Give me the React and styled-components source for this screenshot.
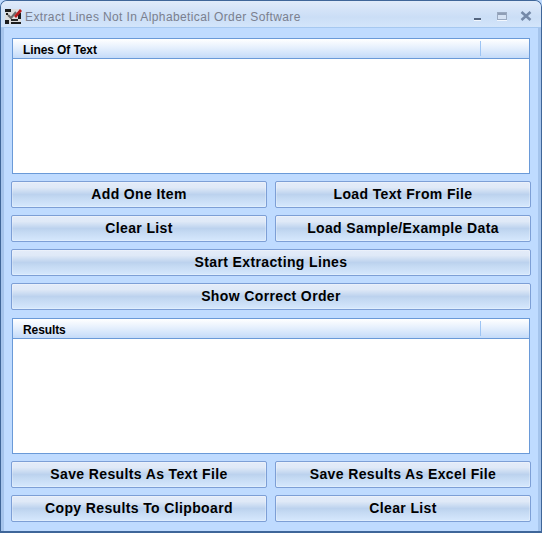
import React from "react";
import styled, { createGlobalStyle } from "styled-components";

const Global = createGlobalStyle`
  html, body { margin: 0; padding: 0; background: #bfdbff; }
  #root { width: 542px; height: 533px; overflow: hidden; }
`;

const Win = styled.div`
  width: 542px;
  height: 533px;
  box-sizing: border-box;
  display: flex;
  flex-direction: column;
  background: #bfdbff;
  border-radius: 7px 7px 0 0;
  border: 1px solid #3f6699;
  border-bottom-width: 2px;
  font-family: "Liberation Sans", Arial, sans-serif;
`;

const TitleBar = styled.div`
  height: 27px;
  box-sizing: border-box;
  flex: none;
  display: flex;
  align-items: center;
  padding: 5px 0 0 4px;
  background: linear-gradient(180deg, #e0ebfa 0%, #d5e4f8 30%, #cbdef6 62%, #d3e5fb 100%);
  border-bottom: 1px solid #a6c8f0;
  border-radius: 6px 6px 0 0;
`;

const TitleIcon = styled.svg`
  width: 17px;
  height: 17px;
  flex: none;
`;

const TitleText = styled.div`
  margin-left: 3px;
  font-size: 12px;
  letter-spacing: 0.38px;
  color: #7b7f8e;
  white-space: nowrap;
  flex: 1;
`;

const Controls = styled.div`
  display: flex;
  align-items: center;
  gap: 4px;
  padding-right: 4px;
`;

const CtrlIcon = styled.svg`
  display: block;
  width: 20px;
  height: 14px;
`;

const Body = styled.div`
  flex: 1;
  display: flex;
  flex-direction: column;
  gap: 7px;
  padding: 10px 7px 0;
  border-left: 3px solid #a5c4ec;
  border-right: 3px solid #a5c4ec;
  box-sizing: border-box;
`;

const ListBox = styled.div`
  height: 136px;
  margin: ${(p) => (p.$lower ? "1px" : "0")} 1px 0;
  flex: none;
  box-sizing: border-box;
  background: #fff;
  border: 1px solid #6a9ad8;
  display: flex;
  flex-direction: column;
`;

const ListHead = styled.div`
  height: 19px;
  flex: none;
  display: flex;
  background: linear-gradient(180deg, #ffffff 0%, #e6f0fd 45%, #c4dbf9 100%);
  border-bottom: 1px solid #6a9ad8;
`;

const HeadCell = styled.div`
  width: 457px;
  padding-left: 10px;
  margin: 2px 0;
  font-size: 12px;
  font-weight: 700;
  letter-spacing: -0.1px;
  line-height: 18px;
  color: #000;
  border-right: 1px solid #9cc4f4;
`;

const Row = styled.div`
  display: flex;
  gap: 8px;
`;

const Btn = styled.button`
  flex: 1;
  height: 27px;
  padding: 0 0 2px;
  box-sizing: border-box;
  border: 1px solid #7d9fd6;
  border-radius: 2px;
  background: linear-gradient(180deg, #e4ecf9 0%, #dfe9f7 22%, #bcd2ee 50%, #c5daf3 65%, #d6e8fd 100%);
  box-shadow: inset 0 0 0 1px rgba(255,255,255,.25);
  font-family: "Liberation Sans", Arial, sans-serif;
  font-size: 14px;
  font-weight: 700;
  letter-spacing: 0.37px;
  color: #000;
`;

function Lst({ title, lower }) {
  return (
    <ListBox $lower={lower}>
      <ListHead>
        <HeadCell>{title}</HeadCell>
      </ListHead>
    </ListBox>
  );
}

export default function App() {
  return (
    <Win>
      <Global />
      <TitleBar>
        <TitleIcon viewBox="0 0 17 17">
          <rect x="0" y="1" width="16" height="15" fill="#dcdcdc" />
          <path d="M0 1h6v3H0zM0 12h4v4H0zM6 14h10v2H6zM13 5h3v6h-3zM1 5h2v2H1z" fill="#1c1c1c" />
          <path d="M3 7l3 3 5-6" stroke="#6a6a6a" strokeWidth="2" fill="none" />
          <path d="M9 8l6-7 2 2-6 7z" fill="#b81c1c" />
          <path d="M6 11h7v2H6z" fill="#2a2a2a" />
        </TitleIcon>
        <TitleText>Extract Lines Not In Alphabetical Order Software</TitleText>
        <Controls>
          <CtrlIcon viewBox="0 0 20 14">
            <rect x="5" y="8" width="7" height="2" fill="#54657f" />
            <rect x="5" y="10" width="7" height="1" fill="#f2f7fe" />
          </CtrlIcon>
          <CtrlIcon viewBox="0 0 20 14">
            <rect x="4.5" y="2.5" width="9" height="7" fill="#d5e2f4" stroke="#9aa9c0" />
            <rect x="5" y="3" width="8" height="2" fill="#8f9eb6" />
            <rect x="4" y="10" width="10" height="1" fill="#f2f7fe" />
          </CtrlIcon>
          <CtrlIcon viewBox="0 0 20 14">
            <path d="M4.5 2l9 8M13.5 2l-9 8" stroke="#7589a8" strokeWidth="2.6" />
          </CtrlIcon>
        </Controls>
      </TitleBar>
      <Body>
        <Lst title="Lines Of Text" />
        <Row>
          <Btn>Add One Item</Btn>
          <Btn>Load Text From File</Btn>
        </Row>
        <Row>
          <Btn>Clear List</Btn>
          <Btn>Load Sample/Example Data</Btn>
        </Row>
        <Row>
          <Btn>Start Extracting Lines</Btn>
        </Row>
        <Row>
          <Btn>Show Correct Order</Btn>
        </Row>
        <Lst title="Results" lower />
        <Row>
          <Btn>Save Results As Text File</Btn>
          <Btn>Save Results As Excel File</Btn>
        </Row>
        <Row>
          <Btn>Copy Results To Clipboard</Btn>
          <Btn>Clear List</Btn>
        </Row>
      </Body>
    </Win>
  );
}
